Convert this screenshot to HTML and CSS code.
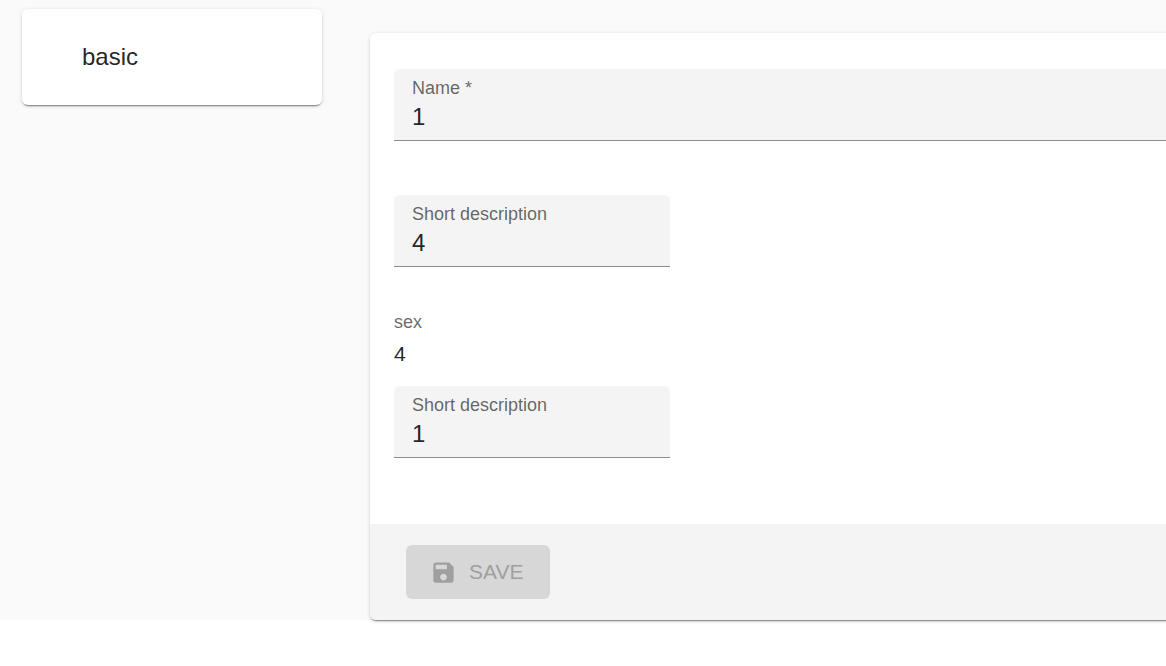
FILE: index.html
```
<!DOCTYPE html>
<html lang="en">
<head>
    <meta charset="UTF-8">
    <meta name="viewport" content="width=device-width, initial-scale=1.0">
    <title>Edit basic</title>
    <link rel="stylesheet" href="styles.css">
</head>
<body>

<div class="container">

    <!-- Filter Section -->
    <aside class="card aside">
        <p>basic</p>
    </aside>

    <!-- Edit Form -->
    <form class="card form">
        <div class="fields">
            <div class="field field-full">
                <label for="name">Name *</label>
                <input type="text" id="name" value="1">
            </div>

            <div class="field">
                <label for="description">Short description</label>
                <input type="text" id="description" value="4">
            </div>

            <div class="labeled">
                <span class="labeled-name">sex</span>
                <span class="labeled-value">4</span>
            </div>

            <div class="field">
                <label for="description-sex">Short description</label>
                <input type="text" id="description-sex" value="1">
            </div>
        </div>

        <!-- Toolbar -->
        <div class="toolbar">
            <button class="save-btn" type="submit" disabled>
                <svg class="save-icon" viewBox="0 0 24 24" aria-hidden="true">
                    <path d="M17 3H5c-1.11 0-2 .9-2 2v14c0 1.1.89 2 2 2h14c1.1 0 2-.9 2-2V7l-4-4zm-5 16c-1.66 0-3-1.34-3-3s1.34-3 3-3 3 1.34 3 3-1.34 3-3 3zm3-10H5V5h10v4z"/>
                </svg>
                SAVE
            </button>
        </div>
    </form>

</div>

</body>
</html>
```
FILE: styles.css
```
/* General Styles */
* {
    margin: 0;
    padding: 0;
    box-sizing: border-box;
    font-family: "Liberation Sans", Arial, sans-serif;
}

body {
    min-height: 100vh;
    background: white;
    color: rgba(0, 0, 0, 0.87);
    overflow-x: hidden;
}

.container {
    display: flex;
    align-items: flex-start;
    gap: 48px;
    padding-left: 22px;
    background: #fafafa;
}

.card {
    background: white;
    border-radius: 6px;
    box-shadow: 0 3px 1px -2px rgba(0, 0, 0, 0.2), 0 2px 2px -1px rgba(0, 0, 0, 0.3), 0 1px 4px 0 rgba(0, 0, 0, 0.14);
}

/* Filter Section */
.aside {
    flex: 0 0 300px;
    margin-top: 9px;
    padding: 30px 60px;
    font-size: 24px;
    line-height: 36px;
}

/* Edit Form, runs past the right edge */
.form {
    flex: 1;
    margin-top: 33px;
    margin-right: -48px;
}

.fields {
    display: flex;
    flex-direction: column;
    align-items: flex-start;
    padding: 36px 24px 66px;
}

.field {
    display: flex;
    flex-direction: column;
    width: 276px;
    height: 72px;
    padding: 7px 18px 0;
    background: #f4f4f4;
    border-bottom: 1px solid #8d8d8d;
    border-radius: 6px 6px 0 0;
}

.field-full {
    width: 100%;
    margin-bottom: 54px;
}

.field label {
    color: rgba(0, 0, 0, 0.6);
    font-size: 18px;
    line-height: 24px;
}

.field input {
    width: 100%;
    height: 34px;
    border: none;
    outline: none;
    background: none;
    color: inherit;
    font-size: 24px;
}

.labeled {
    display: flex;
    flex-direction: column;
    gap: 8px;
    margin: 43px 0 20px;
}

.labeled-name {
    color: rgba(0, 0, 0, 0.6);
    font-size: 18px;
    line-height: 24px;
}

.labeled-value {
    font-size: 21px;
    line-height: 24px;
}

/* Toolbar */
.toolbar {
    padding: 21px 36px;
    background: #f4f4f4;
    border-radius: 0 0 6px 6px;
}

.save-btn {
    display: flex;
    align-items: center;
    gap: 12px;
    min-width: 144px;
    height: 54px;
    padding: 0 24px;
    border: none;
    border-radius: 6px;
    background: #d7d7d7;
    color: #9f9f9f;
    font-size: 21px;
}

.save-icon {
    width: 27px;
    height: 27px;
    fill: currentColor;
}
```
